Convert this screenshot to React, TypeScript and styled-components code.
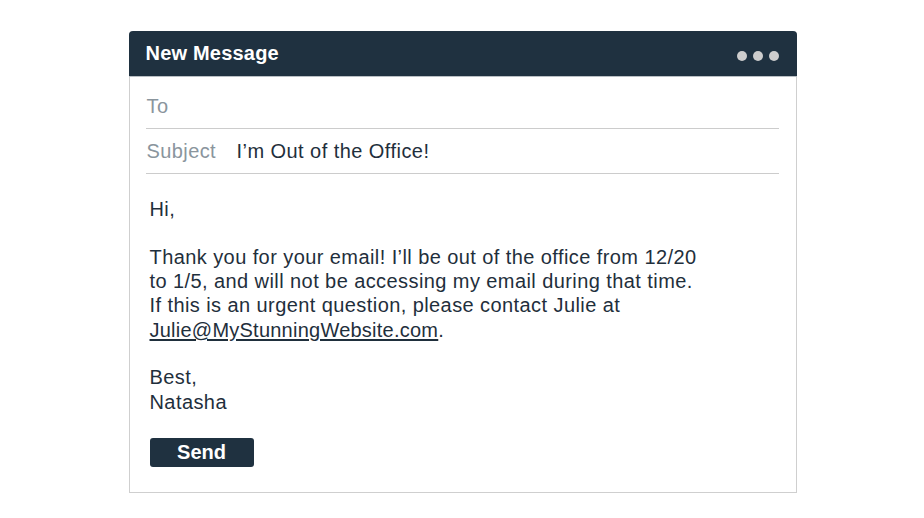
import React from 'react';
import styled, { createGlobalStyle } from 'styled-components';

const GlobalStyle = createGlobalStyle`
  html, body {
    margin: 0;
    padding: 0;
    background: #ffffff;
  }
  body {
    font-family: 'Liberation Sans', Arial, sans-serif;
  }
`;

const Page = styled.div`
  width: 924px;
  height: 518px;
  display: flex;
  justify-content: center;
  padding-top: 31px;
  box-sizing: border-box;
`;

const Window = styled.div`
  width: 668px;
  height: 462px;
  box-sizing: border-box;
  border: 1px solid #cfcfcf;
  border-top: none;
  border-radius: 4px 4px 0 0;
  display: flex;
  flex-direction: column;
  margin-left: 1px;
`;

const Header = styled.div`
  height: 45px;
  background: #1f3140;
  border-radius: 4px 4px 0 0;
  margin: 0 -1px;
  display: flex;
  align-items: center;
  justify-content: space-between;
  padding: 0 18px 0 17px;
  box-shadow: 0 1px 0 #b9bfc4;
`;

const Title = styled.span`
  color: #ffffff;
  font-weight: bold;
  font-size: 20px;
  letter-spacing: 0.2px;
`;

const Dots = styled.div`
  display: flex;
  gap: 6px;
  margin-top: 4px;
`;

const Dot = styled.span`
  width: 10px;
  height: 10px;
  border-radius: 50%;
  background: #cdcdcd;
`;

const Fields = styled.div`
  padding: 8px 17px 0 16px;
`;

const FieldRow = styled.div`
  height: 44px;
  display: flex;
  align-items: center;
  border-bottom: 1px solid #cccccc;
  font-size: 20px;
  letter-spacing: 0.4px;
  padding-left: 1px;
`;

const Label = styled.span`
  color: #8a959d;
  width: 90px;
`;

const Value = styled.span`
  color: #1f2f3c;
  letter-spacing: 0.45px;
`;

const Body = styled.div`
  padding: 23px 20px 0 20px;
  color: #1f2f3c;
  font-size: 20px;
  letter-spacing: 0.42px;
  line-height: 24.3px;
`;

const Para = styled.p<{ $last?: boolean }>`
  margin: 0 0 ${({ $last }) => ($last ? '0' : '23.5px')} 0;
`;

const Link = styled.a`
  color: #1f2f3c;
  text-decoration: underline;
  text-underline-offset: 2px;
  letter-spacing: 0.24px;
`;

const SendButton = styled.button`
  display: block;
  margin-top: 24px;
  width: 104px;
  height: 29px;
  background: #1f3140;
  color: #ffffff;
  border: none;
  border-radius: 3px;
  font-family: 'Liberation Sans', Arial, sans-serif;
  font-weight: bold;
  font-size: 20px;
  padding: 0;
`;

export default function App() {
  return (
    <>
      <GlobalStyle />
      <Page>
        <Window>
          <Header>
            <Title>New Message</Title>
            <Dots>
              <Dot />
              <Dot />
              <Dot />
            </Dots>
          </Header>
          <Fields>
            <FieldRow>
              <Label>To</Label>
            </FieldRow>
            <FieldRow>
              <Label>Subject</Label>
              <Value>I’m Out of the Office!</Value>
            </FieldRow>
          </Fields>
          <Body>
            <Para>Hi,</Para>
            <Para>
              Thank you for your email! I’ll be out of the office from 12/20
              <br />
              to 1/5, and will not be accessing my email during that time.
              <br />
              If this is an urgent question, please contact Julie at
              <br />
              <Link href="#">Julie@MyStunningWebsite.com</Link>.
            </Para>
            <Para $last>
              Best,
              <br />
              Natasha
            </Para>
            <SendButton>Send</SendButton>
          </Body>
        </Window>
      </Page>
    </>
  );
}
